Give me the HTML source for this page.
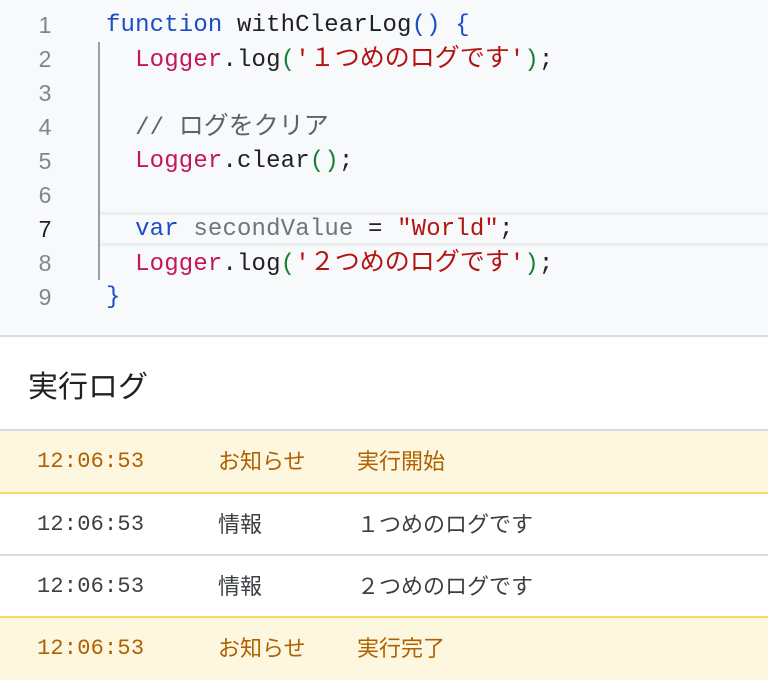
<!DOCTYPE html>
<html><head><meta charset="utf-8"><style>
*{margin:0;padding:0;box-sizing:border-box}
body{width:768px;height:664px;overflow:hidden;background:#fff;font-family:"Liberation Sans","Noto Sans CJK JP",sans-serif}
.code{position:absolute;left:0;top:0;width:768px;height:337px;background:#f8f9fa;border-bottom:2px solid #dadce0}
.ln{position:absolute;left:30px;width:30px;text-align:center;font:23px "Liberation Sans",sans-serif;color:#80868b}
.l{position:absolute;left:106px;font:24px/34px "Liberation Mono","Noto Sans CJK JP",monospace;white-space:pre;color:#202124;letter-spacing:0.15px}
.j{font-size:25px;letter-spacing:0}
.k{color:#1a4dc7}.p{color:#c2185b}.s{color:#b31412}.g{color:#188038}.c{color:#5f6368}.v{color:#70757a}
.guide{position:absolute;left:98px;top:42px;width:2px;height:238px;background:#9aa0a6}
.hl{position:absolute;left:100px;top:212px;width:668px;height:34px;border-top:3px solid #eceef0;border-bottom:3px solid #eceef0}
h2{position:absolute;left:28px;top:362px;font-weight:normal;font-size:30px;color:#202124}
.row{position:absolute;left:0;width:768px;height:62px;font-size:22px;line-height:62px}
.row span{position:absolute}
.t{left:37px;font-family:"Liberation Mono",monospace;font-size:22px;letter-spacing:0.2px}
.a{left:218px}.b{left:357px}
.y{background:#fef7e0;color:#b06000}
.w{background:#fff;color:#3c4043}
</style></head><body>
<div class="code">
<div class="hl"></div>
<div class="guide"></div>
<div class="ln" style="top:12px">1</div><div class="ln" style="top:46px">2</div><div class="ln" style="top:80px">3</div><div class="ln" style="top:114px">4</div><div class="ln" style="top:148px">5</div><div class="ln" style="top:182px">6</div><div class="ln" style="top:216px;color:#202124">7</div><div class="ln" style="top:250px">8</div><div class="ln" style="top:284px">9</div>
<div class="l" style="top:9px"><span class="k">function</span> withClearLog<span class="k">()</span> <span class="k">{</span></div>
<div class="l" style="top:43px">  <span class="p">Logger</span>.log<span class="g">(</span><span class="s">'<span class="j">１つめのログです</span>'</span><span class="g">)</span>;</div>
<div class="l" style="top:111px">  <span class="c">// <span class="j">ログをクリア</span></span></div>
<div class="l" style="top:145px">  <span class="p">Logger</span>.clear<span class="g">()</span>;</div>
<div class="l" style="top:213px">  <span class="k">var</span> <span class="v">secondValue</span> = <span class="s">"World"</span>;</div>
<div class="l" style="top:247px">  <span class="p">Logger</span>.log<span class="g">(</span><span class="s">'<span class="j">２つめのログです</span>'</span><span class="g">)</span>;</div>
<div class="l" style="top:281px"><span class="k">}</span></div>
</div>
<h2>実行ログ</h2>
<div style="position:absolute;left:0;top:429px;width:768px;height:2px;background:#dadce0"></div>
<div class="row y" style="top:431px"><span class="t">12:06:53</span><span class="a">お知らせ</span><span class="b">実行開始</span></div>
<div style="position:absolute;left:0;top:492px;width:768px;height:2px;background:#fdd663"></div>
<div class="row w" style="top:494px"><span class="t">12:06:53</span><span class="a">情報</span><span class="b">１つめのログです</span></div>
<div style="position:absolute;left:0;top:554px;width:768px;height:2px;background:#dadce0"></div>
<div class="row w" style="top:556px"><span class="t">12:06:53</span><span class="a">情報</span><span class="b">２つめのログです</span></div>
<div style="position:absolute;left:0;top:616px;width:768px;height:2px;background:#fdd663"></div>
<div class="row y" style="top:618px"><span class="t">12:06:53</span><span class="a">お知らせ</span><span class="b">実行完了</span></div>
</body></html>
